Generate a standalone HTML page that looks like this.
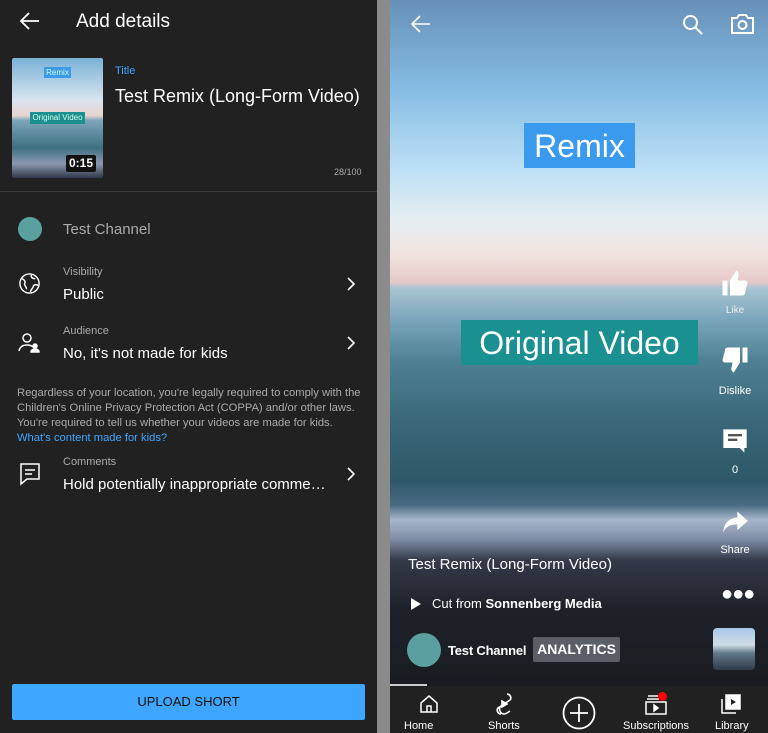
<!DOCTYPE html>
<html><head><meta charset="utf-8"><style>
*{margin:0;padding:0;box-sizing:border-box}
body{width:768px;height:733px;overflow:hidden;background:#212121;font-family:"Liberation Sans",sans-serif;position:relative}
.a{position:absolute}
.L{left:0;top:0;width:377px;height:733px;background:#212121;color:#fff}
.div{left:377px;top:0;width:13px;height:733px;background:#8b8b8b}
.R{left:390px;top:0;width:378px;height:733px;overflow:hidden;
background:linear-gradient(180deg,#6790b8 0px,#86bde4 90px,#bde0f5 170px,#e6eef2 220px,#f2e4e0 255px,#e6c8c8 282px,#a9c4d2 288px,#7aa6bb 320px,#4f8194 360px,#3a6878 420px,#2d5868 480px,#4a6b82 505px,#a8b6cc 520px,#7d8aa4 540px,#343a4a 560px,#1e2128 610px,#1a1c22 685px)}
.g{color:#aaa}
svg{position:absolute}
</style></head><body>
<div class="a L">
<svg style="left:19px;top:10px" width="22" height="22" viewBox="0 0 22 22"><path d="M20 11H2M10 3L2 11l8 8" stroke="#fff" stroke-width="1.8" fill="none"/></svg>
<div class="a" style="left:76px;top:11px;font-size:19px">Add details</div>
<div class="a" style="left:12px;top:58px;width:91px;height:120px;background:linear-gradient(180deg,#7ab2d8,#d8e4ee 35%,#e8d4d0 48%,#7ba6b8 52%,#3d7080 75%,#8a98b0 88%,#303848);border-radius:2px"></div>
<div class="a" style="left:44px;top:67px;width:27px;height:11px;background:#3d9ae8;font-size:8px;text-align:center;line-height:11px;color:#cfe">Remix</div>
<div class="a" style="left:30px;top:112px;width:55px;height:12px;background:#1d8f8f;font-size:8px;text-align:center;line-height:12px;color:#cfe">Original Video</div>
<div class="a" style="left:66px;top:155px;width:30px;height:17px;background:#111;border-radius:2px;font-size:12px;line-height:17px;text-align:center;font-weight:bold">0:15</div>
<div class="a" style="left:115px;top:65px;font-size:11px;color:#3ea6ff">Title</div>
<div class="a" style="left:115px;top:86px;font-size:18px">Test Remix (Long-Form Video)</div>
<div class="a g" style="left:334px;top:167px;font-size:9px">28/100</div>
<div class="a" style="left:0;top:191px;width:377px;height:1px;background:#3c3c3c"></div>
<div class="a" style="left:18px;top:217px;width:24px;height:24px;border-radius:50%;background:#5aa0a0"></div>
<div class="a g" style="left:63px;top:221px;font-size:15px">Test Channel</div>
<svg style="left:18px;top:272px" width="23" height="23" viewBox="0 0 24 24" fill="none" stroke="#fff" stroke-width="1.5"><circle cx="12" cy="12" r="10"/><path d="M4 7c3 1 4 3 3 5s2 3 2 6M14 3c-1 3 2 4 4 4M13 21c0-3 3-4 3-6s3-2 5-1"/></svg>
<div class="a g" style="left:63px;top:266px;font-size:11px">Visibility</div>
<div class="a" style="left:63px;top:286px;font-size:15px">Public</div>
<svg style="left:345px;top:276px" width="12" height="16"><path d="M3 2l6 6-6 6" stroke="#fff" stroke-width="1.6" fill="none"/></svg>
<svg style="left:18px;top:332px" width="24" height="22" viewBox="0 0 24 22" fill="none" stroke="#fff" stroke-width="1.5"><circle cx="9" cy="6" r="4"/><path d="M1 19c1-5 5-6 8-6s5 1 6 2"/><circle cx="17" cy="14" r="2" fill="#fff"/><path d="M13 20c0-2 2-3 4-3s4 1 4 3z" fill="#fff"/></svg>
<div class="a g" style="left:63px;top:325px;font-size:11px">Audience</div>
<div class="a" style="left:63px;top:345px;font-size:15px">No, it's not made for kids</div>
<svg style="left:345px;top:335px" width="12" height="16"><path d="M3 2l6 6-6 6" stroke="#fff" stroke-width="1.6" fill="none"/></svg>
<div class="a g" style="left:17px;top:386px;font-size:11.2px;line-height:15px;width:352px">Regardless of your location, you're legally required to comply with the Children's Online Privacy Protection Act (COPPA) and/or other laws. You're required to tell us whether your videos are made for kids.<br><span style="color:#3ea6ff">What's content made for kids?</span></div>
<svg style="left:19px;top:462px" width="22" height="24" viewBox="0 0 22 24" fill="none" stroke="#fff" stroke-width="1.5"><path d="M2 2h18v15H8l-6 5z"/><path d="M6 8h10M6 12h7"/></svg>
<div class="a g" style="left:63px;top:456px;font-size:11px">Comments</div>
<div class="a" style="left:63px;top:476px;font-size:15px">Hold potentially inappropriate comme…</div>
<svg style="left:345px;top:466px" width="12" height="16"><path d="M3 2l6 6-6 6" stroke="#fff" stroke-width="1.6" fill="none"/></svg>
<div class="a" style="left:12px;top:684px;width:353px;height:36px;background:#3ea6ff;border-radius:2px;color:#111;font-size:13px;text-align:center;line-height:36px">UPLOAD SHORT</div>
</div>
<div class="a div"></div>
<div class="a R">
<svg style="left:20px;top:14px" width="22" height="20"><path d="M20 10H2M10 2L2 10l8 8" stroke="#fff" stroke-width="1.6" fill="none"/></svg>
<svg style="left:292px;top:14px" width="22" height="22"><circle cx="8.5" cy="8.5" r="6.5" stroke="#fff" stroke-width="2" fill="none"/><path d="M13 13l7 7" stroke="#fff" stroke-width="2.2"/></svg>
<svg style="left:340px;top:13px" width="25" height="22"><path d="M2 5h5l2-3h7l2 3h5v15H2z" stroke="#fff" stroke-width="2" fill="none"/><circle cx="12.5" cy="12" r="4" stroke="#fff" stroke-width="2" fill="none"/></svg>
<div class="a" style="left:134px;top:123px;width:111px;height:45px;background:#3a9aee;color:#fff;font-size:32px;text-align:center;line-height:47px">Remix</div>
<div class="a" style="left:71px;top:320px;width:237px;height:45px;background:#1a9090;color:#fff;font-size:32px;text-align:center;line-height:47px">Original Video</div>
<svg style="left:330px;top:268px" width="30" height="30" viewBox="0 0 24 24" fill="#fff"><path d="M2 10h4v12H2zM8 22h10c1 0 2-1 2-2l2-8c0-1-1-2-2-2h-6l1-5c0-1-1-3-2-3L8 10z"/></svg>
<div class="a" style="left:330px;top:305px;font-size:10px;color:#eee;width:30px;text-align:center">Like</div>
<svg style="left:330px;top:345px" width="30" height="30" viewBox="0 0 24 24" fill="#fff"><path d="M18 2h4v12h-4zM16 2H6C5 2 4 3 4 4l-2 8c0 1 1 2 2 2h6l-1 5c0 1 1 3 2 3l5-8z"/></svg>
<div class="a" style="left:325px;top:385px;font-size:11px;color:#fff;width:40px;text-align:center">Dislike</div>
<svg style="left:331px;top:427px" width="28" height="28" viewBox="0 0 24 24" fill="#fff"><path d="M2 2h20v16h-2v4l-4-4H2z"/><path d="M6 7h12M6 11h8" stroke="#555" stroke-width="2"/></svg>
<div class="a" style="left:330px;top:464px;font-size:11px;color:#fff;width:30px;text-align:center">0</div>
<svg style="left:331px;top:508px" width="28" height="28" viewBox="0 0 24 24" fill="#fff"><path d="M14 3l9 8-9 8v-5c-6 0-10 2-12 7 0-7 4-12 12-13z"/></svg>
<div class="a" style="left:325px;top:544px;font-size:11px;color:#fff;width:40px;text-align:center">Share</div>
<div class="a" style="left:331px;top:583px;font-size:20px;color:#fff;letter-spacing:-1px">●●●</div>
<div class="a" style="left:18px;top:556px;font-size:15px;color:#fff">Test Remix (Long-Form Video)</div>
<svg style="left:20px;top:597px" width="12" height="14"><path d="M1 1l10 6-10 6z" fill="#fff"/></svg>
<div class="a" style="left:42px;top:596px;font-size:13px;color:#fff">Cut from <b>Sonnenberg Media</b></div>
<div class="a" style="left:17px;top:633px;width:34px;height:34px;border-radius:50%;background:#5aa0a0"></div>
<div class="a" style="left:58px;top:643px;font-size:13px;color:#fff;font-weight:bold;letter-spacing:-0.2px">Test Channel</div>
<div class="a" style="left:143px;top:637px;width:87px;height:25px;background:#5a5e66;color:#fff;font-size:14px;font-weight:bold;text-align:center;line-height:25px;border-radius:2px">ANALYTICS</div>
<div class="a" style="left:323px;top:628px;width:42px;height:42px;border-radius:4px;background:linear-gradient(180deg,#a8c8e8,#d0dde8 40%,#607888 60%,#303a48)"></div>
<div class="a" style="left:0;top:684px;width:37px;height:2px;background:#ccc"></div>
<div class="a" style="left:0;top:686px;width:378px;height:47px;background:#212121"></div>
<svg style="left:29px;top:694px" width="20" height="20" viewBox="0 0 20 20" fill="none" stroke="#fff" stroke-width="1.5"><path d="M2 9l8-7 8 7v9H2z"/><path d="M8 18v-6h4v6"/></svg>
<div class="a" style="left:14px;top:720px;font-size:11px;color:#fff">Home</div>
<svg style="left:105px;top:692px" width="18" height="24" viewBox="0 0 18 24" fill="none" stroke="#fff" stroke-width="1.6"><path d="M12 2c3 0 5 4 3 6l-9 6c-3 2-1 8 3 8 2 0 3-1 6-3M6 22c-3 0-5-4-3-6l9-6"/><path d="M7 9l5 3-5 3z" fill="#fff"/></svg>
<div class="a" style="left:98px;top:720px;font-size:11px;color:#fff">Shorts</div>
<svg style="left:172px;top:696px" width="34" height="34"><circle cx="17" cy="17" r="15.5" stroke="#fff" stroke-width="1.8" fill="none"/><path d="M17 8v18M8 17h18" stroke="#fff" stroke-width="1.8"/></svg>
<svg style="left:254px;top:692px" width="24" height="24" viewBox="0 0 24 24" fill="none" stroke="#fff" stroke-width="1.5"><path d="M4 4h10M3 7h12M2 10h20v12H2z"/><path d="M10 13l4 3-4 3z" fill="#fff"/></svg>
<div class="a" style="left:268px;top:692px;width:9px;height:9px;border-radius:50%;background:#f00"></div>
<div class="a" style="left:233px;top:720px;font-size:11px;color:#fff">Subscriptions</div>
<svg style="left:330px;top:693px" width="22" height="22" viewBox="0 0 22 22" fill="none" stroke="#fff" stroke-width="1.5"><path d="M2 6v14h14"/><rect x="6" y="2" width="14" height="14" fill="#fff"/><path d="M11 6l5 3-5 3z" fill="#222" stroke="none"/></svg>
<div class="a" style="left:325px;top:720px;font-size:11px;color:#fff">Library</div>
</div>
</body></html>
